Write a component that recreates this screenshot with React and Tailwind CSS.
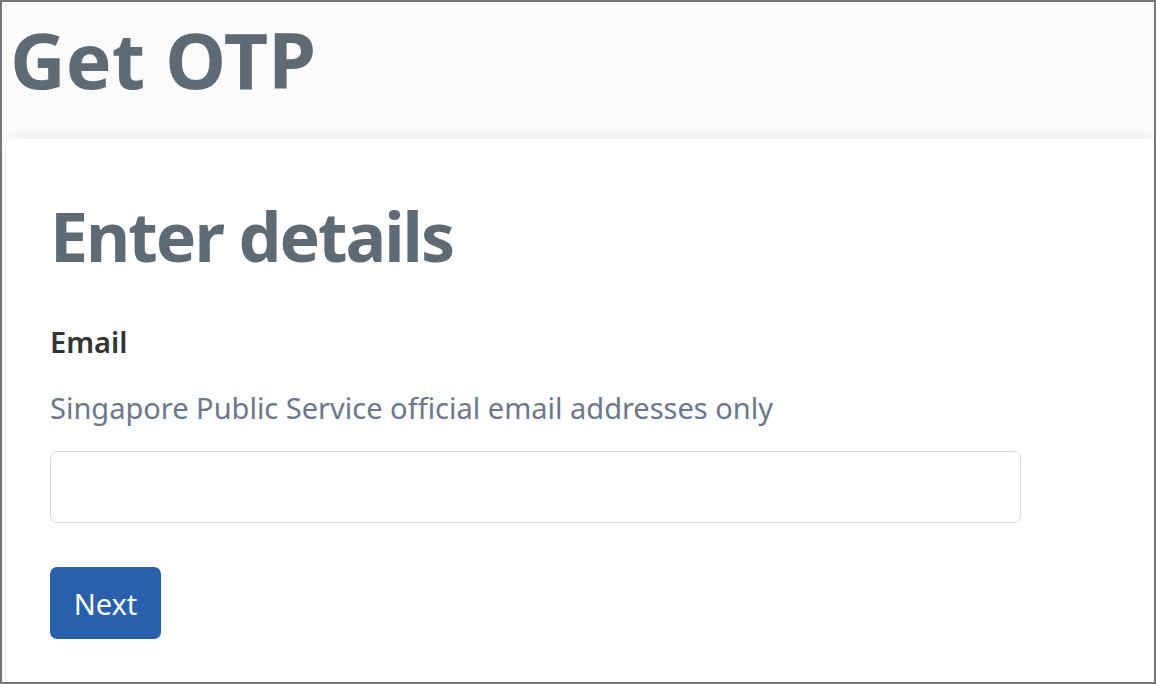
export default function App() {
  return (
    <div className="h-[684px] w-[1156px] overflow-hidden border-2 border-[#777777] bg-[#fbfbfb] font-['Noto_Sans',sans-serif]">
      <div className="pt-[19px] pl-[8px] h-[137px]">
        <h1 className="text-[77px] leading-none font-bold text-[#5f6b74]">Get OTP</h1>
      </div>
      <div className="ml-[4px] h-[600px] rounded-tl-[8px] bg-white pt-[63px] pl-[44px] shadow-[0_-6px_14px_rgba(0,0,0,0.04)]">
        <h2 className="text-[68px] leading-none font-bold tracking-[-2px] text-[#5f6b74]">Enter details</h2>
        <label className="mt-[57px] block text-[29px] leading-none font-semibold text-[#333333]">Email</label>
        <p className="mt-[37px] text-[29px] leading-none text-[#6b788c]">Singapore Public Service official email addresses only</p>
        <input
          type="email"
          className="mt-[29px] block h-[72px] w-[971px] rounded-[7px] border border-[#d9d9d9] bg-white px-4 text-[29px] outline-none"
        />
        <button className="mt-[44px] flex h-[72px] w-[111px] items-center justify-center rounded-[7px] bg-[#2960ab] text-[29px] leading-none text-white">
          Next
        </button>
      </div>
    </div>
  );
}
